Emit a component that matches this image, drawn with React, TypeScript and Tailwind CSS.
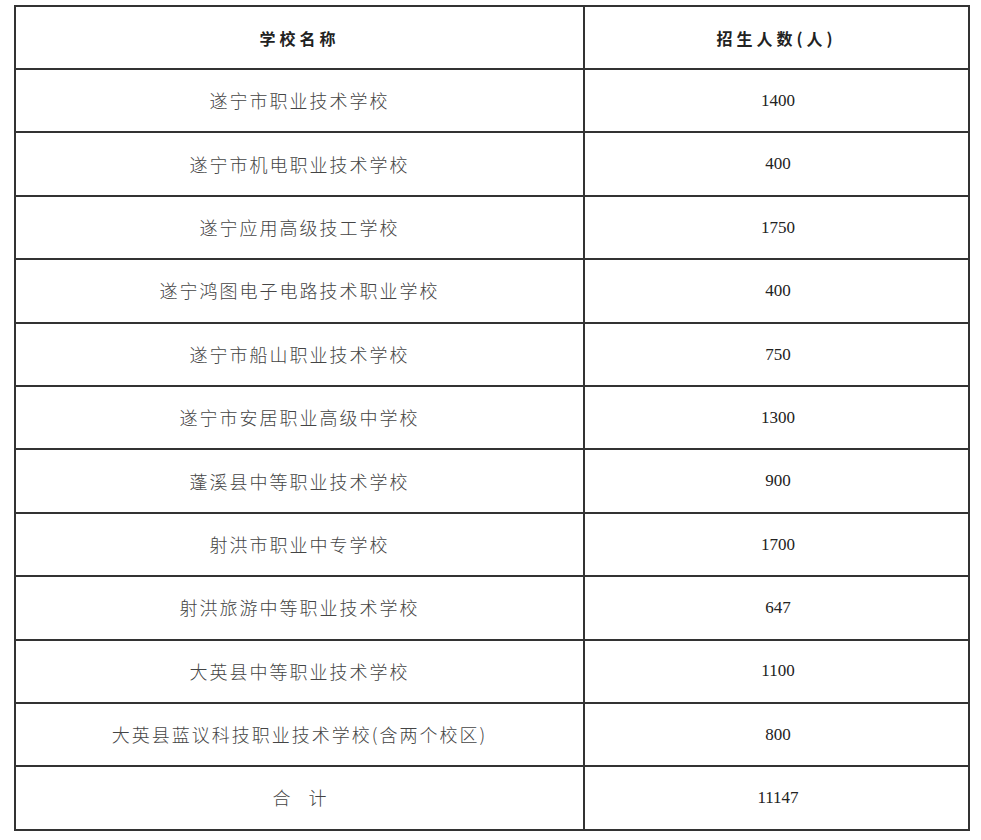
const rows: [string, string][] = [
  ["遂宁市职业技术学校", "1400"],
  ["遂宁市机电职业技术学校", "400"],
  ["遂宁应用高级技工学校", "1750"],
  ["遂宁鸿图电子电路技术职业学校", "400"],
  ["遂宁市船山职业技术学校", "750"],
  ["遂宁市安居职业高级中学校", "1300"],
  ["蓬溪县中等职业技术学校", "900"],
  ["射洪市职业中专学校", "1700"],
  ["射洪旅游中等职业技术学校", "647"],
  ["大英县中等职业技术学校", "1100"],
  ["大英县蓝议科技职业技术学校(含两个校区)", "800"],
];

const cjk = "font-['Noto_Sans_CJK_SC','Noto_Sans',sans-serif]";
const num = "font-['Liberation_Serif','Times_New_Roman',serif]";

export default function App() {
  return (
    <div className="w-[981px] h-[840px] bg-white pt-[5px] pl-[14px]">
      <table className="w-[956px] border-collapse border-2 border-[#333] table-fixed">
        <colgroup>
          <col className="w-[569px]" />
          <col />
        </colgroup>
        <thead>
          <tr className="h-[63px]">
            <th className={`border-2 border-[#333] text-[16px] font-bold tracking-[4px] text-[#222] ${cjk}`}>
              学校名称
            </th>
            <th className={`border-2 border-[#333] text-[16px] font-bold tracking-[4px] text-[#222] ${cjk}`}>
              招生人数(人)
            </th>
          </tr>
        </thead>
        <tbody>
          {rows.map(([name, count]) => (
            <tr key={name} className="h-[63.4px]">
              <td className={`border-2 border-[#333] text-center text-[18px] font-light tracking-[2px] text-[#444] ${cjk}`}>
                {name}
              </td>
              <td className={`border-2 border-[#333] text-center text-[17px] text-[#222] pl-[3px] ${num}`}>
                {count}
              </td>
            </tr>
          ))}
          <tr className="h-[63.4px]">
            <td className={`border-2 border-[#333] text-center text-[18px] font-light text-[#444] ${cjk}`}>
              合&emsp;计
            </td>
            <td className={`border-2 border-[#333] text-center text-[17px] text-[#222] pl-[3px] ${num}`}>
              11147
            </td>
          </tr>
        </tbody>
      </table>
    </div>
  );
}
